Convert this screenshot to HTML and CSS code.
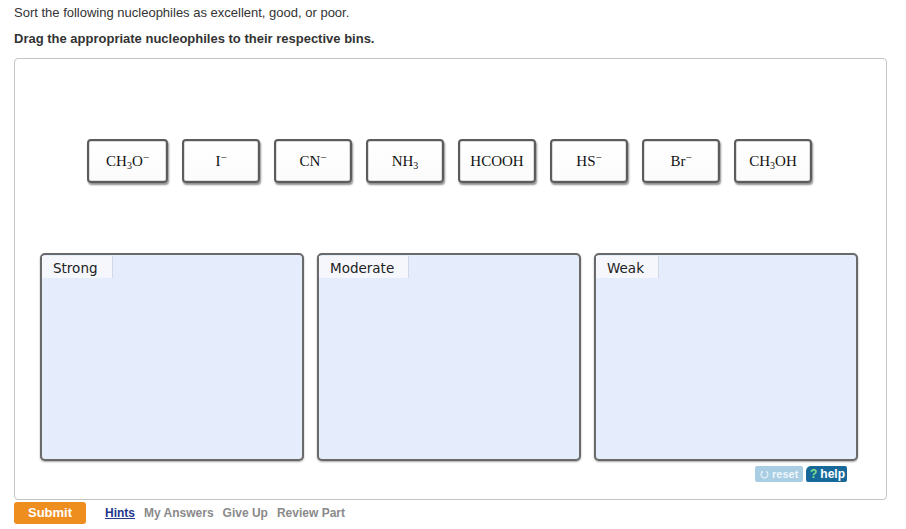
FILE: index.html
```html
<!DOCTYPE html>
<html lang="en">
<head>
    <meta charset="UTF-8">
    <title>Sort Nucleophiles</title>
    <link rel="stylesheet" href="styles.css">
</head>
<body>
    <div class="page">
        <p class="intro">Sort the following nucleophiles as excellent, good, or poor.</p>
        <p class="task">Drag the appropriate nucleophiles to their respective bins.</p>

        <div class="workspace">
            <div class="tiles">
                <div class="tile wide"><span>CH<sub>3</sub>O<sup>&minus;</sup></span></div>
                <div class="tile"><span>I<sup>&minus;</sup></span></div>
                <div class="tile"><span>CN<sup>&minus;</sup></span></div>
                <div class="tile"><span>NH<sub>3</sub></span></div>
                <div class="tile"><span>HCOOH</span></div>
                <div class="tile"><span>HS<sup>&minus;</sup></span></div>
                <div class="tile"><span>Br<sup>&minus;</sup></span></div>
                <div class="tile"><span>CH<sub>3</sub>OH</span></div>
            </div>

            <div class="bins">
                <div class="bin"><span class="bin-label">Strong</span></div>
                <div class="bin"><span class="bin-label">Moderate</span></div>
                <div class="bin"><span class="bin-label">Weak</span></div>
            </div>

            <div class="tools">
                <span class="tool reset">
                    <svg width="9" height="9" viewBox="0 0 10 10">
                        <path d="M6.6 1.6 A3.8 3.8 0 1 1 2.2 2.4" fill="none" stroke="#e4f1f9" stroke-width="1.4"/>
                        <path d="M0.8 1.2 L3.6 1.4 L2.4 3.9 Z" fill="#e4f1f9"/>
                    </svg>
                    reset
                </span>
                <span class="tool help"><span class="qmark">?</span> help</span>
            </div>
        </div>

        <div class="footer">
            <span class="submit">Submit</span>
            <a class="link active" href="#">Hints</a>
            <span class="link">My Answers</span>
            <span class="link">Give Up</span>
            <span class="link">Review Part</span>
        </div>
    </div>
</body>
</html>
```

FILE: styles.css
```css
body {
    margin: 0;
    background-color: #fff;
    font-family: "Liberation Sans", Arial, sans-serif;
    color: #333;
}
.page {
    padding: 5px 0 0 14px;
    width: 873px;
}
p {
    margin: 0;
    font-size: 13px;
    line-height: 16px;
}
.task {
    margin-top: 10px;
    font-weight: bold;
}
.workspace {
    margin-top: 11px;
    border: 1px solid #c4c4c4;
    border-radius: 4px;
    height: 442px;
    padding-top: 80px;
    box-sizing: border-box;
}
.tiles {
    display: flex;
    gap: 14px;
    padding-left: 72px;
}
.tile {
    width: 78px;
    height: 44px;
    box-sizing: border-box;
    border: 2px solid #5c5c5c;
    border-radius: 4px;
    background: linear-gradient(180deg, #ffffff 0%, #fbfbfb 100%);
    box-shadow: 1px 2px 2px rgba(0,0,0,0.45), inset 0 0 0 1px #dcdcdc;
    display: flex;
    align-items: center;
    justify-content: center;
    font-family: "Liberation Serif", "Times New Roman", serif;
    font-size: 15px;
    color: #111;
}
.tile.wide {
    width: 81px;
}
.tile sub {
    font-size: 10px;
    vertical-align: -3px;
    line-height: 0;
}
.tile sup {
    font-size: 11px;
    vertical-align: 5px;
    line-height: 0;
}
.bins {
    display: flex;
    gap: 13px;
    padding-left: 25px;
    margin-top: 70px;
}
.bin {
    width: 264px;
    height: 208px;
    box-sizing: border-box;
    border: 2px solid #6a6a6a;
    border-radius: 5px;
    background-color: #e5ecfb;
    box-shadow: 0 1px 2px rgba(0,0,0,0.35);
    padding-top: 1px;
}
.bin-label {
    display: inline-block;
    height: 22px;
    line-height: 24px;
    padding: 0 14px 0 11px;
    background-color: #f5f7fc;
    border-right: 1px solid #d4d8e2;
    font-family: "DejaVu Sans", Verdana, sans-serif;
    font-size: 13.5px;
    color: #222;
}
.tools {
    display: flex;
    justify-content: flex-end;
    gap: 3px;
    margin-top: 5px;
    padding-right: 39px;
}
.tool {
    display: flex;
    align-items: center;
    gap: 3px;
    height: 16px;
    padding: 0 4px;
    border-radius: 2px;
    font-size: 11px;
    font-weight: bold;
    color: #fff;
}
.reset {
    width: 48px;
    box-sizing: border-box;
    padding-left: 5px;
    background-color: #a9cde3;
    color: #eef6fb;
}
.help {
    width: 41px;
    box-sizing: border-box;
    background-color: #17699a;
    border-top-left-radius: 5px;
    font-size: 12px;
}
.qmark {
    color: #7ee08a;
}
.footer {
    display: flex;
    align-items: center;
    margin-top: 2px;
    font-size: 12px;
    font-weight: bold;
}
.submit {
    width: 72px;
    height: 22px;
    line-height: 22px;
    text-align: center;
    background-color: #ee8e1f;
    border-radius: 3px;
    color: #fff;
    font-size: 13px;
    margin-right: 19px;
}
.link {
    color: #8a8a8a;
    margin-right: 9px;
    text-decoration: none;
}
.link.active {
    color: #24388c;
    text-decoration: underline;
}
```
